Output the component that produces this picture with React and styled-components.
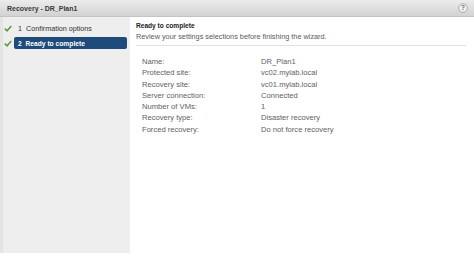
import React from 'react';
import styled, { createGlobalStyle } from 'styled-components';

const GlobalStyle = createGlobalStyle`
  html, body { margin: 0; padding: 0; background: #ffffff; }
  body { font-family: "Liberation Sans", Arial, sans-serif; }
`;

const steps = [
  { num: 1, label: 'Confirmation options', done: true },
  { num: 2, label: 'Ready to complete', done: true, active: true },
];

const rows = [
  ['Name:', 'DR_Plan1'],
  ['Protected site:', 'vc02.mylab.local'],
  ['Recovery site:', 'vc01.mylab.local'],
  ['Server connection:', 'Connected'],
  ['Number of VMs:', '1'],
  ['Recovery type:', 'Disaster recovery'],
  ['Forced recovery:', 'Do not force recovery'],
];

const Check = () => (
  <svg width="8" height="7" viewBox="0 0 8 7">
    <path d="M0.8 3.6 L3 5.8 L7.3 0.9" fill="none" stroke="#5b9e3a" strokeWidth="1.5" />
  </svg>
);

const HelpIcon = () => (
  <svg width="10" height="10" viewBox="0 0 10 10">
    <circle cx="5" cy="5" r="4.3" fill="#f4f4f4" stroke="#9a9a9a" strokeWidth="0.8" />
    <text x="5" y="7.3" fontSize="6.5" textAnchor="middle" fill="#666" fontFamily="Liberation Sans, Arial, sans-serif" fontWeight="bold">?</text>
  </svg>
);

export default function App() {
  return (
    <>
      <GlobalStyle />
      <Window>
        <TitleBar>
          <Title>Recovery - DR_Plan1</Title>
          <HelpIcon />
        </TitleBar>
        <Body>
          <Sidebar>
            {steps.map((s) => (
              <Step key={s.num}>
                <CheckSlot>{s.done && <Check />}</CheckSlot>
                <StepLabel active={s.active}>
                  {s.num}&nbsp;&nbsp;{s.label}
                </StepLabel>
              </Step>
            ))}
          </Sidebar>
          <Content>
            <Heading>Ready to complete</Heading>
            <SubHeading>Review your settings selections before finishing the wizard.</SubHeading>
            <Divider />
            <Table>
              {rows.map(([k, v]) => (
                <React.Fragment key={k}>
                  <Cell>{k}</Cell>
                  <Cell>{v}</Cell>
                </React.Fragment>
              ))}
            </Table>
          </Content>
        </Body>
      </Window>
    </>
  );
}

const Window = styled.div`
  width: 474px;
  height: 256px;
  display: flex;
  flex-direction: column;
  overflow: hidden;
  background: #ffffff;
`;

const TitleBar = styled.div`
  height: 16px;
  flex: none;
  display: flex;
  align-items: center;
  justify-content: space-between;
  padding: 0 6px 0 7px;
  background: linear-gradient(#ececec, #d2d2d2);
  border-bottom: 1px solid #c4c4c4;
`;

const Title = styled.div`
  font-size: 7px;
  font-weight: bold;
  color: #3a3a3a;
`;

const Body = styled.div`
  flex: 1;
  display: flex;
  min-height: 0;
`;

const Sidebar = styled.div`
  width: 130px;
  flex: none;
  background: #eeeeee;
  border-left: 3px solid #e4e4e4;
  box-sizing: border-box;
  padding: 5px 3px 0 0;
  display: flex;
  flex-direction: column;
  gap: 3px;
  margin-bottom: 3px;
`;

const Step = styled.div`
  display: flex;
  align-items: center;
  height: 12px;
`;

const CheckSlot = styled.div`
  width: 10px;
  flex: none;
  display: flex;
  align-items: center;
  padding-left: 1px;
`;

const StepLabel = styled.div`
  flex: 1;
  height: 12px;
  display: flex;
  align-items: center;
  padding-left: ${(p) => (p.active ? '4px' : '4px')};
  border-radius: 2px;
  font-size: ${(p) => (p.active ? '6.7px' : '7.2px')};
  font-weight: ${(p) => (p.active ? 'bold' : 'normal')};
  color: ${(p) => (p.active ? '#ffffff' : '#333333')};
  background: ${(p) => (p.active ? '#1f4b7a' : 'transparent')};
`;

const Content = styled.div`
  flex: 1;
  padding: 3px 8px 0 6px;
  display: flex;
  flex-direction: column;
`;

const Heading = styled.div`
  font-size: 6.6px;
  font-weight: bold;
  color: #222222;
  line-height: 11px;
`;

const SubHeading = styled.div`
  font-size: 7.3px;
  color: #5a5a5a;
  line-height: 11px;
`;

const Divider = styled.div`
  height: 1px;
  background: #e2e2e2;
  margin: 3px 0 0 0;
`;

const Table = styled.div`
  display: grid;
  grid-template-columns: 119px auto;
  grid-auto-rows: 11.3px;
  padding: 10px 0 0 6px;
`;

const Cell = styled.div`
  font-size: 7.6px;
  color: #5e5e5e;
  line-height: 11.3px;
  white-space: nowrap;
`;
